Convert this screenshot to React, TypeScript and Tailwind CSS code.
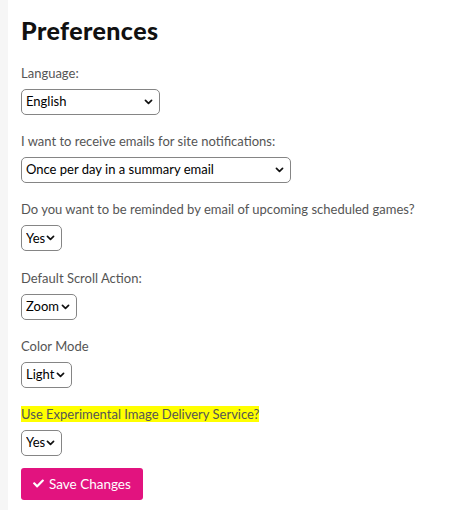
import { FaCheck } from "react-icons/fa";

const fields = [
  { label: "Language:", options: ["English"], width: "w-[139px]" },
  {
    label: "I want to receive emails for site notifications:",
    options: ["Once per day in a summary email"],
    width: "w-[270px]",
  },
  {
    label: "Do you want to be reminded by email of upcoming scheduled games?",
    options: ["Yes", "No"],
    width: "w-[41px]",
  },
  { label: "Default Scroll Action:", options: ["Zoom", "Pan"], width: "w-[56px]" },
  { label: "Color Mode", options: ["Light", "Dark"], width: "w-[51px]" },
];

const Chevron = () => (
  <svg
    viewBox="0 0 10 10"
    className="pointer-events-none absolute right-[7px] top-1/2 h-[9px] w-[9px] -translate-y-1/2"
  >
    <path d="M1.6 3.3 L5 6.6 L8.4 3.3" fill="none" stroke="#111" strokeWidth="1.9" strokeLinecap="round" strokeLinejoin="round" />
  </svg>
);

const Select = ({ options, width }: { options: string[]; width: string }) => (
  <div className={`relative ${width}`}>
    <select
      defaultValue={options[0]}
      className="block h-[26px] w-full appearance-none rounded-[5px] border border-[#858585] bg-white pl-[4px] pr-[12px] text-[13px] text-black outline-none"
      style={{ fontFamily: "Lato, sans-serif" }}
    >
      {options.map((o) => (
        <option key={o}>{o}</option>
      ))}
    </select>
    <Chevron />
  </div>
);

export default function App() {
  return (
    <div className="flex min-h-[510px] bg-white" style={{ fontFamily: "Lato, sans-serif" }}>
      <div className="w-[8px] shrink-0 bg-[#f6f6f6]" />
      <div className="pl-[13px] pt-[15px]">
        <h1 className="mb-[19px] text-[25px] leading-[30px] font-black tracking-[0.4px] text-[#111]">
          Preferences
        </h1>

        {fields.map((f) => (
          <div key={f.label} className="mb-[17.2px]">
            <div className="mb-[7px] text-[13px] leading-[18px] text-[#555]">{f.label}</div>
            <Select options={f.options} width={f.width} />
          </div>
        ))}

        <div className="mb-[12px]">
          <div className="mb-[7px] text-[13px] leading-[18px] text-[#555]">
            <span className="bg-[#ffff00]">Use Experimental Image Delivery Service?</span>
          </div>
          <Select options={["Yes", "No"]} width="w-[41px]" />
        </div>

        <button className="flex h-[32px] items-center gap-[5px] rounded-[3px] bg-[#e2137f] px-[12px] text-[13.5px] text-white">
          <FaCheck className="h-[11px] w-[11px]" />
          Save Changes
        </button>
      </div>
    </div>
  );
}
